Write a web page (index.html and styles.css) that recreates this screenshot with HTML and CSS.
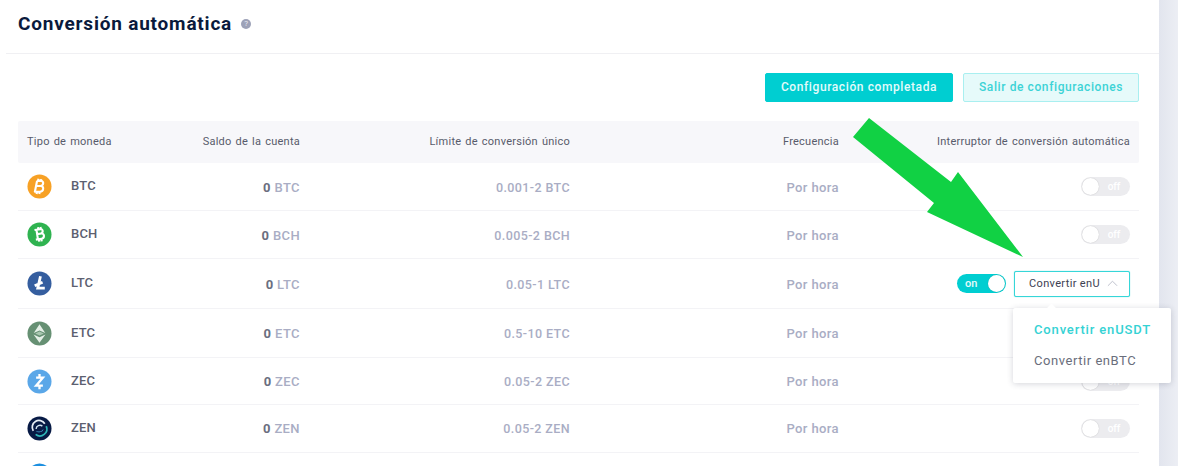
FILE: index.html
```html
<!DOCTYPE html>
<html lang="es">
<head>
<meta charset="utf-8">
<title>Conversión automática</title>
<link rel="stylesheet" href="styles.css">
</head>
<body>
<div class="shot">
  <main class="main">
    <header class="head">
      <h1 class="title">Conversión automática</h1>
      <span class="help">?</span>
    </header>
    <div class="toolbar">
      <button class="btn btn-primary">Configuración completada</button>
      <button class="btn btn-ghost">Salir de configuraciones</button>
    </div>
    <div class="table">
      <div class="row row-head">
        <div>Tipo de moneda</div>
        <div class="r">Saldo de la cuenta</div>
        <div class="r">Límite de conversión único</div>
        <div class="r">Frecuencia</div>
        <div class="r">Interruptor de conversión automática</div>
      </div>

      <div class="row">
        <div class="coin">
          <svg class="icon" viewBox="0 0 26 26"><circle cx="13" cy="13" r="12.500" fill="#f7a125"/><path d="M10.500 7l-2.400 12M10.500 7.200h3.900c3.400 0 3.200 4.800-.4 5.300H9.300m0 0h5c3.800 0 3.200 6-.9 6H7.500M12 5l-.4 2M14.800 5.300l-.4 2M10.400 18.500l-.4 2.300M13.200 18.500l-.4 2.300" fill="none" stroke="#fff" stroke-width="2.200"/></svg>
          <span class="sym">BTC</span>
        </div>
        <div class="r val"><b>0</b> BTC</div>
        <div class="r lim">0.001-2 BTC</div>
        <div class="r freq">Por hora</div>
        <div class="ctl"><span class="sw"><i class="knob"></i><span class="sw-t">off</span></span></div>
      </div>

      <div class="row">
        <div class="coin">
          <svg class="icon" viewBox="0 0 26 26"><circle cx="13" cy="13" r="12.500" fill="#2fb350"/><path d="M9.800 8l1.600 10M9.800 8l4-.6c3-.4 3.500 3.700.4 4.600l-3.600.6m0 0l4.400-.6c3.300-.4 3.600 4.900.2 5.400l-3.800.6M7.800 8.300l2-.3M9.200 18.300l2.200-.3M11.400 5.500l.4 2M14 5.200l.3 2M12.400 18.500l.3 2M15 18.200l.3 2" fill="none" stroke="#fff" stroke-width="2.200"/></svg>
          <span class="sym">BCH</span>
        </div>
        <div class="r val"><b>0</b> BCH</div>
        <div class="r lim">0.005-2 BCH</div>
        <div class="r freq">Por hora</div>
        <div class="ctl"><span class="sw"><i class="knob"></i><span class="sw-t">off</span></span></div>
      </div>

      <div class="row row-open">
        <div class="coin">
          <svg class="icon" viewBox="0 0 26 26"><circle cx="13" cy="13" r="12.500" fill="#355e9f"/><path d="M14 5.500l-2.800 12.300h7.300M8 15.400l8.200-3.600" fill="none" stroke="#fff" stroke-width="2.900"/></svg>
          <span class="sym">LTC</span>
        </div>
        <div class="r val"><b>0</b> LTC</div>
        <div class="r lim">0.05-1 LTC</div>
        <div class="r freq">Por hora</div>
        <div class="ctl">
          <span class="sw sw-on"><span class="sw-t">on</span><i class="knob"></i></span>
          <div class="select">
            <span class="select-text">Convertir enU</span>
            <svg class="chev" viewBox="0 0 12 7"><path d="M1 6l5-5 5 5" fill="none" stroke="#b9bcc8" stroke-width="1"/></svg>
            <div class="menu">
              <div class="menu-item menu-active">Convertir enUSDT</div>
              <div class="menu-item">Convertir enBTC</div>
            </div>
          </div>
        </div>
      </div>

      <div class="row row-tall row-flat">
        <div class="coin">
          <svg class="icon" viewBox="0 0 26 26"><circle cx="13" cy="13" r="12.500" fill="#669073"/><path d="M13 3.500L7 12.600l6-2.600 6 2.600zM6.800 14l6.200 2.800 6.200-2.800L13 22.500z" fill="#e4efe6"/><path d="M8.500 12.900L13 11l4.500 1.900L13 15z" fill="#a9c7b0"/></svg>
          <span class="sym">ETC</span>
        </div>
        <div class="r val"><b>0</b> ETC</div>
        <div class="r lim">0.5-10 ETC</div>
        <div class="r freq">Por hora</div>
      </div>

      <div class="row row-short row-flat">
        <div class="coin">
          <svg class="icon" viewBox="0 0 26 26"><circle cx="13" cy="13" r="12.500" fill="#5aa7e8"/><path d="M9.500 9h7L9.500 17.300h7M13 5.200V9M13 17.300V21" fill="none" stroke="#fff" stroke-width="2.400"/></svg>
          <span class="sym">ZEC</span>
        </div>
        <div class="r val"><b>0</b> ZEC</div>
        <div class="r lim">0.05-2 ZEC</div>
        <div class="r freq">Por hora</div>
        <div class="ctl"><span class="sw"><i class="knob"></i><span class="sw-t">off</span></span></div>
      </div>

      <div class="row row-flat">
        <div class="coin">
          <svg class="icon" viewBox="0 0 26 26"><circle cx="13" cy="13" r="12.500" fill="#071a45"/><path d="M6.500 15.500A7 7 0 0 1 18.500 8" fill="none" stroke="#e6edf5" stroke-width="1.800"/><path d="M9.500 13.500A4 4 0 0 1 16 10.500" fill="none" stroke="#cfe0ee" stroke-width="1.500"/><path d="M20 10.500a7.200 7.200 0 0 1-11 8.600" fill="none" stroke="#2fb6b8" stroke-width="1.800"/><path d="M9.500 15.500c3 1.500 6 .5 7.500-2 .3 3-6 5-7.500 2z" fill="#4aa6d8"/></svg>
          <span class="sym">ZEN</span>
        </div>
        <div class="r val"><b>0</b> ZEN</div>
        <div class="r lim">0.05-2 ZEN</div>
        <div class="r freq">Por hora</div>
        <div class="ctl"><span class="sw"><i class="knob"></i><span class="sw-t">off</span></span></div>
      </div>

      <div class="row row-cut">
        <div class="coin">
          <svg class="icon" viewBox="0 0 26 26"><circle cx="13" cy="13" r="12.500" fill="#1c8fe0"/></svg>
        </div>
      </div>

      <svg class="arrow" viewBox="0 0 190 150" aria-hidden="true"><polygon points="31,0 15,19 96,85 89,94 185,139 120,54 113,64" fill="#11d144"/></svg>
    </div>
  </main>
  <aside class="rail"></aside>
</div>
</body>
</html>
```

FILE: styles.css
```css
* { box-sizing: border-box; }

html, body {
  margin: 0;
  background: #fff;
}

body {
  font-family: Roboto, "Liberation Sans", Arial, sans-serif;
  width: 1186px;
  height: 475px;
  overflow: hidden;
}

.shot {
  display: flex;
  width: 1178px;
  height: 466px;
  overflow: hidden;
}

.main {
  width: 1159px;
  flex: none;
  padding-left: 6px;
}

.rail {
  flex: 1;
  background: linear-gradient(90deg, #e2e5ee 0%, #eceef4 100%);
}

.head {
  display: flex;
  align-items: center;
  height: 54px;
  padding: 0 0 6px 12px;
  border-bottom: 1px solid #f0f0f3;
}

.title {
  margin: 0;
  font-size: 19px;
  font-weight: 700;
  letter-spacing: .8px;
  color: #0a1a3c;
}

.help {
  width: 10px;
  height: 10px;
  margin: 0 0 0 9px;
  border-radius: 50%;
  background: #9da2b8;
  color: #e8e9f0;
  font-size: 8px;
  line-height: 10px;
  text-align: center;
}

.toolbar {
  display: flex;
  justify-content: flex-end;
  gap: 10px;
  padding: 19px 20px 19px 0;
}

.btn {
  height: 29px;
  padding: 0 0 1px;
  border-radius: 2px;
  font: 500 12px Roboto, "Liberation Sans", Arial, sans-serif;
  letter-spacing: .6px;
}

.btn-primary {
  width: 188px;
  border: 1px solid #00ced1;
  background: #00ced1;
  color: #e4fbfb;
}

.btn-ghost {
  width: 176px;
  border: 1px solid #a9eff0;
  background: #e6fafa;
  color: #3dd3d6;
}

.table {
  position: relative;
  margin: 0 20px 0 12px;
}

.row {
  display: grid;
  grid-template-columns: 150px 123px 270px 269px 291px;
  align-items: center;
  height: 48px;
  padding: 0 9px;
  border-bottom: 1px solid #f3f3f6;
  font-size: 12px;
  letter-spacing: .4px;
}

.row-head {
  height: 42px;
  padding-bottom: 2px;
  border: 0;
  border-radius: 2px;
  background: #f7f7fa;
  color: #575b6b;
  font-size: 11px;
  letter-spacing: .25px;
  word-spacing: 1px;
}

.row-open { height: 50px; }
.row-tall { height: 49px; }
.row-short { height: 47px; }

.row-cut {
  align-items: start;
  padding-top: 10px;
  border: 0;
}

.r {
  text-align: right;
  white-space: nowrap;
}

.coin {
  display: flex;
  align-items: center;
  gap: 19px;
}

.icon {
  width: 25px;
  height: 25px;
  flex: none;
}

.sym {
  position: relative;
  top: -1px;
  font-size: 13px;
  font-weight: 500;
  letter-spacing: .2px;
  color: #5c6070;
}

.val,
.lim,
.freq {
  padding-top: 2px;
  color: #a9adc4;
  font-weight: 500;
}

.row-flat .val,
.row-flat .lim,
.row-flat .freq { padding-top: 0; }

.val,
.freq { font-size: 13px; }

.lim { font-size: 12.500px; }

.val b { color: #6a6e80; font-weight: 700; }

.ctl {
  display: flex;
  justify-content: flex-end;
  align-items: center;
  gap: 8px;
}

.sw {
  display: flex;
  align-items: center;
  justify-content: space-between;
  width: 49px;
  height: 19px;
  padding: 0 1px;
  border-radius: 10px;
  background: #ececef;
}

.sw-t {
  flex: 1;
  text-align: center;
  font-size: 10px;
  font-weight: 500;
  letter-spacing: 0;
  color: #fff;
}

.knob {
  width: 17px;
  height: 17px;
  border-radius: 50%;
  background: #fff;
  box-shadow: 0 0 1px rgba(0, 0, 0, .25);
}

.sw-on { background: #00ced1; }

.sw-on .sw-t {
  padding-left: 7px;
  text-align: left;
  font-size: 11px;
  color: #e6fbfb;
}

.select {
  position: relative;
  display: flex;
  align-items: center;
  width: 116px;
  height: 26px;
  padding-left: 14px;
  border: 1px solid #36d6d8;
  border-radius: 2px;
  background: #fff;
  box-shadow: 0 0 1px #36d6d8;
  font-size: 11px;
  letter-spacing: .35px;
  color: #3d4152;
}

.select-text {
  width: 72px;
  overflow: hidden;
  white-space: nowrap;
}

.chev {
  width: 11px;
  height: 7px;
  margin-left: 6px;
}

.menu {
  position: absolute;
  top: 36px;
  left: -2px;
  z-index: 2;
  width: 158px;
  height: 75px;
  padding: 6px 0;
  border-radius: 2px;
  background: #fff;
  box-shadow: 0 1px 6px rgba(40, 45, 70, .2);
}

.menu::before {
  content: "";
  position: absolute;
  top: -3px;
  left: 35px;
  width: 7px;
  height: 7px;
  background: #fff;
  transform: rotate(45deg);
}

.menu-item {
  height: 31px;
  padding-left: 21px;
  font-size: 13px;
  font-weight: 400;
  line-height: 31px;
  letter-spacing: .55px;
  color: #6a6e7c;
}

.menu-active {
  font-weight: 500;
  letter-spacing: .85px;
  color: #35d2d4;
}

.arrow {
  position: absolute;
  left: 820px;
  top: -3px;
  width: 190px;
  height: 150px;
  pointer-events: none;
}
```
